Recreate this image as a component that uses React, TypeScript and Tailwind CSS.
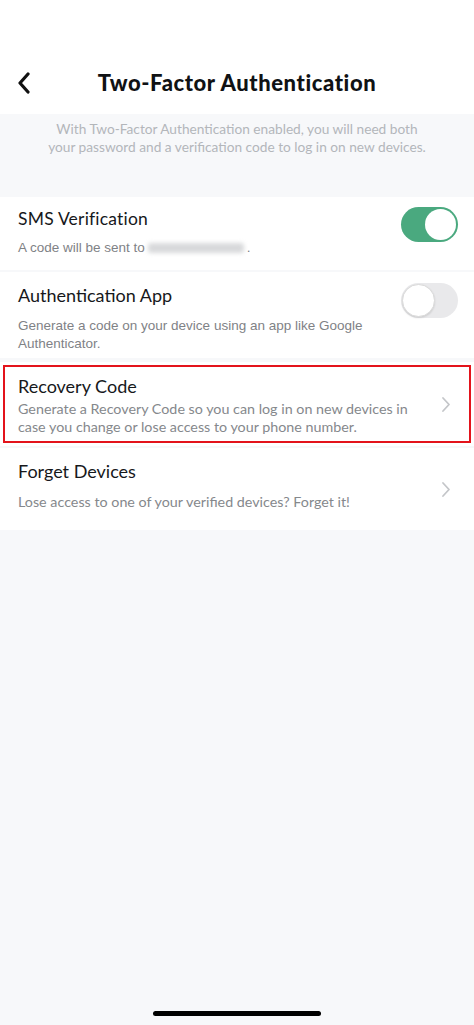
import React from "react";

const avenir = { fontFamily: "Lato, 'Open Sans', sans-serif" };
const helv = { fontFamily: "'Liberation Sans', Arial, sans-serif" };

function Toggle({ on }: { on: boolean }) {
  return on ? (
    <div className="w-[57px] h-[35px] rounded-full bg-[#4aa97f] flex items-center justify-end pr-[2px]">
      <div className="w-[31px] h-[31px] rounded-full bg-white" />
    </div>
  ) : (
    <div className="w-[57px] h-[35px] rounded-full bg-[#e9e9eb] flex items-center pl-[1px]">
      <div className="w-[33px] h-[33px] rounded-full bg-white border border-[#dadada] shadow-[0_1px_2px_rgba(0,0,0,0.12)]" />
    </div>
  );
}

function Chevron() {
  return (
    <svg width="10" height="17" viewBox="0 0 10 17" fill="none">
      <path d="M2 2l6 6.5L2 15" stroke="#c4c6c9" strokeWidth="1.8" strokeLinecap="round" strokeLinejoin="round" />
    </svg>
  );
}

export default function App() {
  return (
    <div className="w-[474px] h-[1025px] bg-[#f7f8fa] flex flex-col relative overflow-hidden">
      <div className="h-[114px] bg-white flex items-end pb-[20px] relative">
        <div className="pl-[16px] w-[60px]">
          <svg width="16" height="22" viewBox="0 0 16 22" fill="none">
            <path d="M12 2L4 11l8 9" stroke="#111" strokeWidth="3.2" strokeLinecap="round" strokeLinejoin="round" />
          </svg>
        </div>
        <div className="absolute left-0 right-0 bottom-[15px] text-center text-[22px] font-black text-[#101214] tracking-[0.6px]" style={avenir}>
          Two-Factor Authentication
        </div>
      </div>

      <div className="h-[83px] pt-[6px] text-center text-[13.7px] leading-[18px] text-[#b3b6ba]" style={avenir}>
        With Two-Factor Authentication enabled, you will need both
        <br />
        your password and a verification code to log in on new devices.
      </div>

      <div className="flex flex-col gap-[2px]">
        <div className="bg-white h-[73px] flex items-center pl-[18px] pr-[16px]">
          <div className="flex-1 flex flex-col">
            <div className="text-[17.5px] leading-[22px] text-[#16181b] mt-[-2px] tracking-[0.2px]" style={avenir}>SMS Verification</div>
            <div className="text-[13.5px] leading-[18px] text-[#7f8286] mt-[9px] flex items-center" style={helv}>
              A code will be sent to
              <span className="inline-block w-[96px] h-[10px] mx-[3px] rounded-[3px] bg-[#d8d9db] blur-[2px]" />.
            </div>
          </div>
          <div className="self-start mt-[10px]">
            <Toggle on={true} />
          </div>
        </div>

        <div className="bg-white h-[86px] flex pl-[18px] pr-[16px] pt-[12px]">
          <div className="flex-1 flex flex-col">
            <div className="text-[18px] leading-[22px] text-[#16181b]" style={avenir}>Authentication App</div>
            <div className="text-[13.5px] leading-[18px] text-[#7f8286] mt-[11px]" style={helv}>
              Generate a code on your device using an app like Google Authenticator.
            </div>
          </div>
          <div className="mt-[-1px]">
            <Toggle on={false} />
          </div>
        </div>

        <div className="bg-white h-[84px] flex items-center pl-[18px] pr-[23px] mt-[2px] relative">
          <div className="flex-1 flex flex-col mt-[3px]">
            <div className="text-[18px] leading-[22px] text-[#16181b]" style={avenir}>Recovery Code</div>
            <div className="text-[14.3px] leading-[18px] text-[#85888c] pr-[18px] mt-[3px]" style={avenir}>
              Generate a Recovery Code so you can log in on new devices in case you change or lose access to your phone number.
            </div>
          </div>
          <Chevron />
          <div className="absolute left-[3px] right-[3px] top-[3px] bottom-[3px] border-2 border-[#e3131b]" />
        </div>

        <div className="bg-white h-[82px] flex items-center pl-[18px] pr-[23px]">
          <div className="flex-1 flex flex-col mt-[-8px]">
            <div className="text-[18px] leading-[22px] text-[#16181b]" style={avenir}>Forget Devices</div>
            <div className="text-[14.3px] leading-[18px] text-[#85888c] mt-[11px]" style={avenir}>
              Lose access to one of your verified devices? Forget it!
            </div>
          </div>
          <Chevron />
        </div>
      </div>

      <div className="flex-1" />
      <div className="flex justify-center pb-[9px]">
        <div className="w-[168px] h-[5px] rounded-full bg-black" />
      </div>
    </div>
  );
}
